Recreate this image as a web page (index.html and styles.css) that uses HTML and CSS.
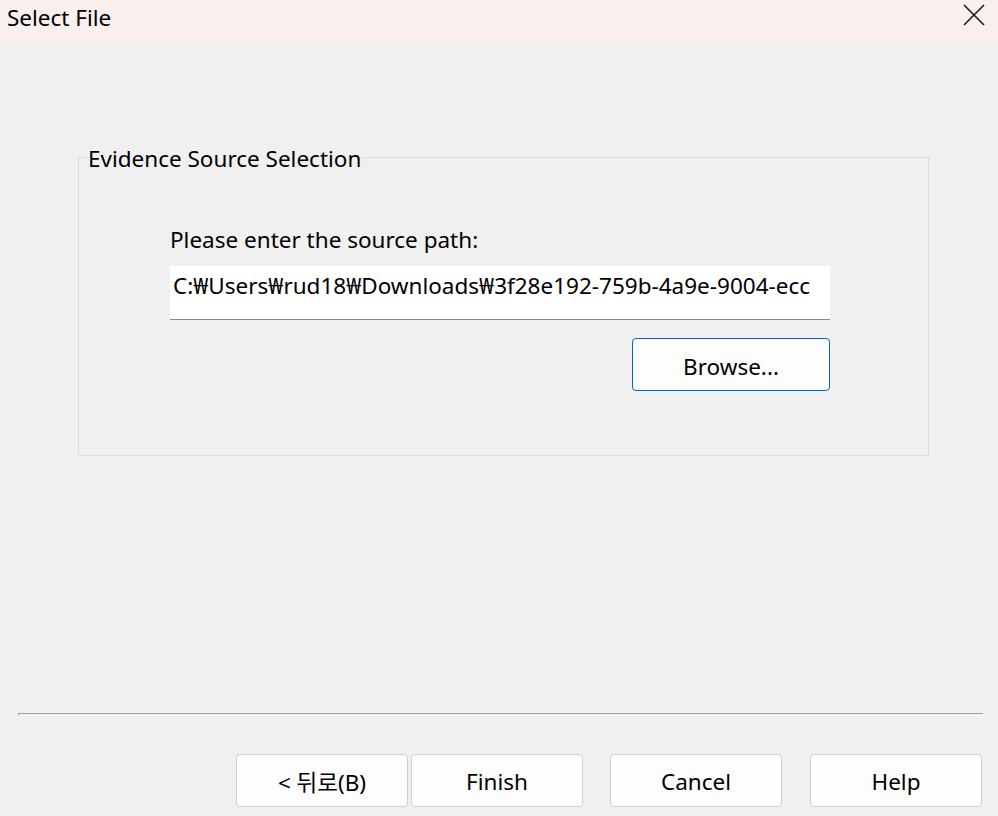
FILE: index.html
```html
<!doctype html>
<html>
  <head>
    <title>Select File</title>
    <meta charset="utf-8" />
    <link rel="stylesheet" href="styles.css">
  </head>
  <body>
    <div class="window">
      <div class="titlebar">
        <span class="title">Select File</span>
        <svg class="close" width="22" height="22" viewBox="0 0 22 22">
          <path d="M1 1 L21 21 M21 1 L1 21" stroke="#1a1a1a" stroke-width="1.6" fill="none"/>
        </svg>
      </div>
      <div class="content">
        <fieldset class="group">
          <legend>Evidence Source Selection</legend>
          <div class="group-body">
            <div class="label">Please enter the source path:</div>
            <div class="path">C:₩Users₩rud18₩Downloads₩3f28e192-759b-4a9e-9004-ecc</div>
            <div class="browse-row">
              <div class="btn browse">Browse...</div>
            </div>
          </div>
        </fieldset>
        <div class="separator"></div>
        <div class="buttons">
          <div class="btn">&lt; 뒤로(B)</div>
          <div class="btn finish">Finish</div>
          <div class="btn cancel">Cancel</div>
          <div class="btn help">Help</div>
        </div>
      </div>
    </div>
  </body>
</html>
```
FILE: styles.css
```css
html, body {
  margin: 0;
  padding: 0;
}

body {
  font-family: "Noto Sans", "Noto Sans CJK KR", sans-serif;
  font-size: 22.5px;
  color: #000000;
  background-color: #f0f0f0;
}

.window {
  width: 998px;
  height: 816px;
  overflow: hidden;
}

.titlebar {
  height: 44px;
  background-color: #f9f0ee;
  display: flex;
  align-items: center;
  justify-content: space-between;
  padding: 0 13px 0 7px;
}

.title {
  margin-top: -9px;
}

.close {
  margin-top: -14px;
}

.content {
  height: 772px;
  background-color: #f0f0f0;
  padding-top: 97px;
  box-sizing: border-box;
}

.group {
  margin: 0 0 0 78px;
  width: 851px;
  min-width: 0;
  height: 315px;
  box-sizing: border-box;
  border: 1px solid #dcdcdc;
  padding: 0;
}

.group legend {
  padding: 3px 1px 0 1px;
  margin-left: 8px;
  line-height: 30px;
}

.group-body {
  padding: 0 98px 0 91px;
}

.label {
  margin-top: 50px;
  line-height: 32px;
}

.path {
  margin-top: 10px;
  height: 54px;
  box-sizing: border-box;
  background-color: #ffffff;
  border-bottom: 1px solid #868686;
  padding: 5px 0 0 3px;
  white-space: nowrap;
  overflow: hidden;
  line-height: 30px;
}

.browse-row {
  display: flex;
  justify-content: flex-end;
  margin-top: 18px;
}

.btn {
  width: 172px;
  height: 53px;
  box-sizing: border-box;
  border: 1px solid #d0d0d0;
  border-radius: 4px;
  background-color: #fdfdfd;
  display: flex;
  align-items: center;
  justify-content: center;
  padding-top: 2px;
}

.browse {
  width: 198px;
  border-color: #0067c0;
  padding-top: 4px;
}

.separator {
  margin: 257px 15px 0 18px;
  height: 1px;
  border-top: 1px solid #a0a0a0;
  border-left: 1px solid #a0a0a0;
  border-bottom: 1px solid #ffffff;
}

.buttons {
  display: flex;
  margin: 38px 0 0 236px;
}

.finish {
  margin-left: 3px;
}

.cancel {
  margin-left: 27px;
}

.help {
  margin-left: 28px;
}
```
